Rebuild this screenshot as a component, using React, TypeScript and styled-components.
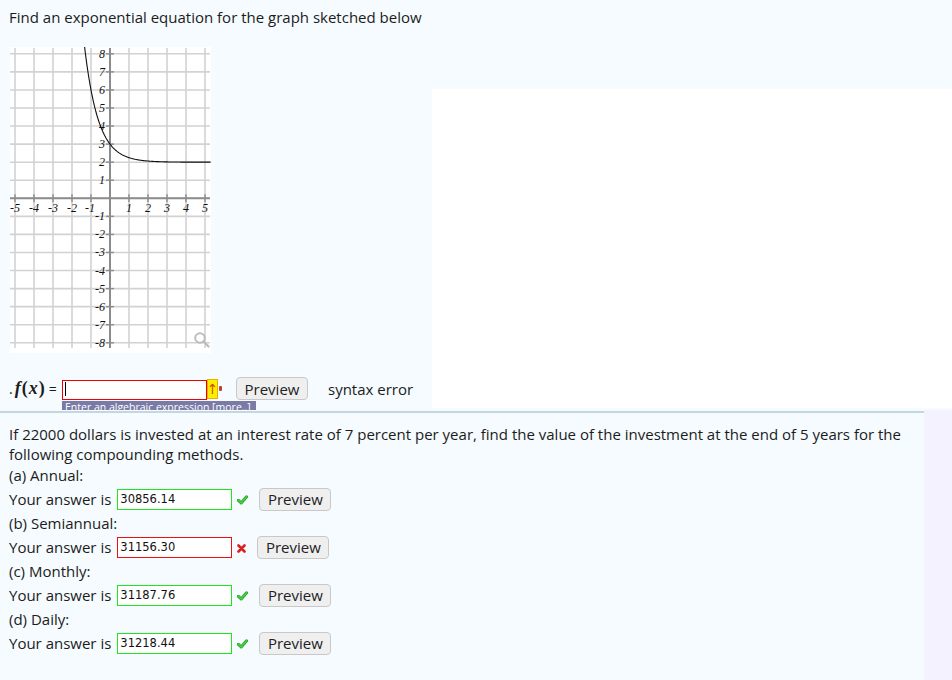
import React from "react";
import styled, { createGlobalStyle } from "styled-components";

const GlobalStyle = createGlobalStyle`
  html, body {
    margin: 0;
    padding: 0;
    background: #f5fbfe;
  }
  body {
    font-family: "Open Sans", "Liberation Sans", sans-serif;
    font-size: 15px;
    color: #1c1c1c;
  }
`;

// graph geometry (svg local coords)
const X0 = 100;
const Y0 = 151.3;
const UX = 19;
const UY = 18.06;
const px = (u: number) => X0 + u * UX;
const py = (v: number) => Y0 - v * UY;

const curvePath = Array.from({ length: 220 }, (_, i) => {
  const u = -1.34 + (i * (5.3 + 1.34)) / 219;
  const v = 2 + Math.pow(4, -u);
  return `${i ? "L" : "M"}${px(u).toFixed(2)} ${py(v).toFixed(2)}`;
}).join(" ");

const xs = [-5, -4, -3, -2, -1, 0, 1, 2, 3, 4, 5];
const ys = [-8, -7, -6, -5, -4, -3, -2, -1, 0, 1, 2, 3, 4, 5, 6, 7, 8];

const answers = [
  { label: "(a) Annual:", value: "30856.14", ok: true },
  { label: "(b) Semiannual:", value: "31156.30", ok: false },
  { label: "(c) Monthly:", value: "31187.76", ok: true },
  { label: "(d) Daily:", value: "31218.44", ok: true },
];

const Graph = () => (
  <GraphSvg width="201" height="306" viewBox="0 0 201 306">
    <rect x="0" y="0" width="201" height="306" fill="#fff" />
    {xs.map((u) => (
      <line key={"v" + u} x1={px(u)} y1="1" x2={px(u)} y2="301" stroke="#d2d2d2" strokeWidth="1.6" />
    ))}
    {ys.map((v) => (
      <line key={"h" + v} x1="0" y1={py(v)} x2="200" y2={py(v)} stroke="#d2d2d2" strokeWidth="1.6" />
    ))}
    <line x1="0" y1={py(0)} x2="200" y2={py(0)} stroke="#8c8c8c" strokeWidth="2" />
    <line x1={px(0)} y1="1" x2={px(0)} y2="301" stroke="#8c8c8c" strokeWidth="2" />
    {xs.filter((u) => u !== 0).map((u) => (
      <line key={"tx" + u} x1={px(u)} y1={py(0) - 4} x2={px(u)} y2={py(0) + 4} stroke="#8c8c8c" strokeWidth="1.4" />
    ))}
    {ys.filter((v) => v !== 0).map((v) => (
      <line key={"ty" + v} x1={px(0) - 4} y1={py(v)} x2={px(0) + 4} y2={py(v)} stroke="#8c8c8c" strokeWidth="1.4" />
    ))}
    <path d={curvePath} fill="none" stroke="#111" strokeWidth="1.1" />
    <g fontFamily='"Liberation Serif", "DejaVu Serif", serif' fontStyle="italic" fontSize="12" fill="#111">
      {xs.filter((u) => u !== 0).map((u) => (
        <text key={"lx" + u} x={u === -1 ? px(u) - 1 : px(u)} y={py(0) + 14} textAnchor="middle">
          {u}
        </text>
      ))}
      {ys.filter((v) => v !== 0).map((v) => (
        <text key={"ly" + v} x={px(0) - 5} y={py(v) + 4} textAnchor="end">
          {v}
        </text>
      ))}
    </g>
    <circle cx="190" cy="291" r="4.8" fill="none" stroke="#bdbdbd" strokeWidth="2" />
    <line x1="193.5" y1="294.5" x2="198.5" y2="299.5" stroke="#bdbdbd" strokeWidth="2.4" strokeLinecap="round" />
  </GraphSvg>
);

const CheckIcon = () => (
  <MarkSvg width="11" height="10" viewBox="0 0 11 10">
    <path d="M1.4 5.3 L4.2 8 L9.6 1.8" fill="none" stroke="#27a127" strokeWidth="3" strokeLinecap="round" strokeLinejoin="round" />
    <path d="M1.4 5.3 L4.2 8 L9.6 1.8" fill="none" stroke="#44d444" strokeWidth="1.4" strokeLinecap="round" strokeLinejoin="round" />
  </MarkSvg>
);

const CrossIcon = () => (
  <MarkSvg width="9" height="9" viewBox="0 0 9 9">
    <path d="M1.5 1.5 L7.5 7.5 M7.5 1.5 L1.5 7.5" stroke="#d92020" strokeWidth="2.6" strokeLinecap="round" />
  </MarkSvg>
);

export default function App() {
  return (
    <Page>
      <GlobalStyle />
      <TopSection>
        <Title>Find an exponential equation for the graph sketched below</Title>
        <TopBody>
          <LeftColumn>
            <Graph />
            <FormulaRow>
              <MathLabel>
                <Dot>.</Dot>
                <MathVar>f</MathVar>
                <MathParen>(</MathParen>
                <MathVar>x</MathVar>
                <MathParen>)</MathParen>
                <Equals>=</Equals>
              </MathLabel>
              <InputWrap>
                <FormulaInput />
                <Caret />
                <Tooltip>Enter an algebraic expression [more..]</Tooltip>
              </InputWrap>
              <ArrowButton>↑</ArrowButton>
              <Blip />
              <PreviewButton>Preview</PreviewButton>
              <ErrorText>syntax error</ErrorText>
            </FormulaRow>
          </LeftColumn>
          <WhitePanel />
        </TopBody>
      </TopSection>
      <LowerSection>
        <LowerMain>
          <Rule />
          <LowerContent>
            <Question>
              If 22000 dollars is invested at an interest rate of 7 percent per year, find the value of the
              investment at the end of 5 years for the following compounding methods.
            </Question>
            {answers.map((a) => (
              <React.Fragment key={a.label}>
                <PartLabel>{a.label}</PartLabel>
                <AnswerLine>
                  <span>Your answer is</span>
                  <AnswerFrame $ok={a.ok}>
                    <AnswerInput defaultValue={a.value} />
                  </AnswerFrame>
                  <MarkSlot>{a.ok ? <CheckIcon /> : <CrossIcon />}</MarkSlot>
                  <PreviewButton>Preview</PreviewButton>
                </AnswerLine>
              </React.Fragment>
            ))}
          </LowerContent>
        </LowerMain>
        <SideColumn />
      </LowerSection>
    </Page>
  );
}

const Page = styled.div`
  width: 952px;
  height: 680px;
  overflow: hidden;
  display: flex;
  flex-direction: column;
`;

const TopSection = styled.section`
  height: 410px;
  flex-shrink: 0;
  overflow: hidden;
  display: flex;
  flex-direction: column;
`;

const Title = styled.p`
  margin: 0;
  padding: 7px 9px 0;
  line-height: 20px;
`;

const TopBody = styled.div`
  display: flex;
  flex: 1;
`;

const LeftColumn = styled.div`
  width: 432px;
  flex-shrink: 0;
  display: flex;
  flex-direction: column;
`;

const WhitePanel = styled.div`
  flex: 1;
  background: #ffffff;
  margin: 62px 0 2px;
`;

const GraphSvg = styled.svg`
  display: block;
  margin: 20px 0 0 10px;
`;

const FormulaRow = styled.div`
  display: flex;
  align-items: center;
  height: 23px;
  margin-top: 24px;
  padding-left: 9px;
`;

const MathLabel = styled.span`
  display: inline-flex;
  align-items: baseline;
  width: 53px;
  flex-shrink: 0;
  white-space: nowrap;
`;

const Dot = styled.span`
  font-size: 14px;
  margin-right: 1px;
`;

const MathVar = styled.span`
  font-family: "Liberation Serif", "DejaVu Serif", serif;
  font-style: italic;
  font-weight: bold;
  font-size: 18px;
  padding: 0 1px;
`;

const MathParen = styled.span`
  font-family: "Liberation Serif", "DejaVu Serif", serif;
  font-weight: bold;
  font-size: 18px;
`;

const Equals = styled.span`
  margin-left: 4px;
  font-size: 14px;
`;

const InputWrap = styled.span`
  position: relative;
  display: inline-block;
  width: 145px;
  height: 20px;
`;

const FormulaInput = styled.input`
  box-sizing: border-box;
  width: 100%;
  height: 100%;
  border: 1px solid #ee0000;
  background: #fff;
  padding: 0 3px;
  outline: none;
`;

const Caret = styled.span`
  position: absolute;
  left: 3px;
  top: 3px;
  bottom: 3px;
  width: 1px;
  background: #000;
`;

const Tooltip = styled.span`
  position: absolute;
  left: 0;
  top: 22px;
  width: 194px;
  box-sizing: border-box;
  padding: 0 3px;
  background: #7b7aa6;
  color: #ffffff;
  font-size: 10.5px;
  line-height: 12px;
  white-space: nowrap;
  overflow: hidden;
`;

const ArrowButton = styled.span`
  box-sizing: border-box;
  width: 11px;
  height: 20px;
  display: inline-flex;
  align-items: center;
  justify-content: center;
  background: #ffee00;
  border: 1px solid #e2b400;
  color: #c85400;
  font-family: "DejaVu Sans", sans-serif;
  font-size: 14px;
  line-height: 1;
  overflow: hidden;
`;

const Blip = styled.span`
  width: 3px;
  height: 5px;
  margin-left: 1px;
  background: #c2402a;
  border-radius: 1px;
  flex-shrink: 0;
`;

const PreviewButton = styled.button`
  box-sizing: border-box;
  width: 72px;
  height: 23px;
  padding: 0;
  margin-left: 14px;
  background: #efefef;
  border: 1px solid #c8c8c8;
  border-radius: 4px;
  font-family: "Open Sans", "Liberation Sans", sans-serif;
  font-size: 15px;
  color: #222;
  flex-shrink: 0;
`;

const ErrorText = styled.span`
  margin-left: 20px;
`;

const LowerSection = styled.section`
  flex: 1;
  display: flex;
`;

const LowerMain = styled.div`
  width: 924px;
  flex-shrink: 0;
`;

const Rule = styled.div`
  height: 2px;
  margin-top: 1px;
  background: #c4d6de;
`;

const LowerContent = styled.div`
  padding: 11px 9px 0;
  line-height: 20px;
`;

const Question = styled.p`
  margin: 0 0 1px;
`;

const PartLabel = styled.div`
  height: 20px;
`;

const AnswerLine = styled.div`
  height: 28px;
  display: flex;
  align-items: center;
  white-space: nowrap;

  ${PreviewButton} {
    margin-left: 0;
  }
`;

const AnswerFrame = styled.span<{ $ok: boolean }>`
  display: inline-flex;
  box-sizing: border-box;
  width: 115px;
  height: 21px;
  margin-left: 6px;
  background: #fff;
  border: 1px solid ${(p) => (p.$ok ? "#1ee51e" : "#ee1010")};
`;

const AnswerInput = styled.input`
  box-sizing: border-box;
  width: 100%;
  height: 100%;
  padding: 0 2px;
  border: none;
  background: transparent;
  font-family: "DejaVu Sans", "Liberation Sans", sans-serif;
  font-size: 11.5px;
  color: #111;
  outline: none;
`;

const MarkSlot = styled.span`
  display: inline-flex;
  align-items: center;
  margin: 2px 11px 0 5px;
`;

const MarkSvg = styled.svg`
  display: block;
`;

const SideColumn = styled.div`
  flex: 1;
  background: #f4f2fe;
`;
